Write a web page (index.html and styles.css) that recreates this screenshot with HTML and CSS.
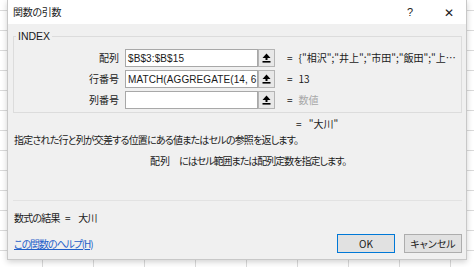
FILE: index.html
```html
<!DOCTYPE html>
<html lang="ja">
<head>
    <meta charset="UTF-8">
    <title>関数の引数</title>
    <link rel="stylesheet" href="styles.css">
</head>
<body>

<div class="dialog">
    <!-- タイトルバー -->
    <div class="titlebar">
        <span class="title">関数の引数</span>
        <span class="help-btn">?</span>
        <span class="close-btn">✕</span>
    </div>

    <div class="content">
        <fieldset class="group">
            <legend>INDEX</legend>
            <div class="arg-row">
                <span class="arg-label">配列</span>
                <div class="arg-input">$B$3:$B$15</div>
                <span class="ref-btn"><svg width="9" height="10" viewBox="0 0 9 10"><path d="M4.5 0.5 L8.5 5 H5.5 V7 H3.5 V5 H0.5 Z" fill="#000"/><rect x="0.5" y="8" width="8" height="1.6" fill="#000"/></svg></span>
                <span class="eq">=</span>
                <span class="arg-value">{"相沢";"井上";"市田";"飯田";"上…</span>
            </div>
            <div class="arg-row">
                <span class="arg-label">行番号</span>
                <div class="arg-input">MATCH(AGGREGATE(14, 6, $B$3:$B$15</div>
                <span class="ref-btn"><svg width="9" height="10" viewBox="0 0 9 10"><path d="M4.5 0.5 L8.5 5 H5.5 V7 H3.5 V5 H0.5 Z" fill="#000"/><rect x="0.5" y="8" width="8" height="1.6" fill="#000"/></svg></span>
                <span class="eq">=</span>
                <span class="arg-value">13</span>
            </div>
            <div class="arg-row">
                <span class="arg-label">列番号</span>
                <div class="arg-input"></div>
                <span class="ref-btn"><svg width="9" height="10" viewBox="0 0 9 10"><path d="M4.5 0.5 L8.5 5 H5.5 V7 H3.5 V5 H0.5 Z" fill="#000"/><rect x="0.5" y="8" width="8" height="1.6" fill="#000"/></svg></span>
                <span class="eq">=</span>
                <span class="arg-value muted">数値</span>
            </div>
        </fieldset>

        <div class="result-line"><span class="eq">=</span> "大川"</div>
        <p class="desc">指定された行と列が交差する位置にある値またはセルの参照を返します。</p>
        <p class="arg-desc"><span class="arg-name">配列</span>にはセル範囲または配列定数を指定します。</p>

        <div class="separator"></div>

        <div class="formula-result">数式の結果 <span class="eq">=</span> 大川</div>

        <div class="footer">
            <a class="help-link" href="#">この関数のヘルプ(H)</a>
            <div class="buttons">
                <button class="btn default">OK</button>
                <button class="btn">キャンセル</button>
            </div>
        </div>
    </div>
</div>

</body>
</html>
```

FILE: styles.css
```css
body {
    margin: 0;
    width: 474px;
    height: 267px;
    overflow: hidden;
    font-family: "Noto Sans CJK JP", "Liberation Sans", sans-serif;
    font-size: 10px;
    line-height: 14px;
    font-feature-settings: "palt";
    color: #1a1a1a;
    background-color: #fff;
    background-image:
        linear-gradient(to right, #dadada 1px, transparent 1px),
        linear-gradient(to bottom, #dadada 1px, transparent 1px);
    background-size: 51px 20px;
    background-position: -9px 10px;
}
.dialog {
    margin-left: 7px;
    width: 460px;
    height: 260px;
    background: #f0f0f0;
    border: 1px solid #c8c8c8;
    border-top: none;
    box-sizing: border-box;
    box-shadow: 0 2px 6px rgba(0, 0, 0, 0.18);
    display: flex;
    flex-direction: column;
}
.titlebar {
    height: 24px;
    background: #fff;
    display: flex;
    align-items: center;
    padding: 0 0 0 5px;
}
.title {
    flex: 1;
    letter-spacing: -0.3px;
}
.help-btn {
    width: 44px;
    text-align: center;
    font-family: "Liberation Sans", sans-serif;
    font-size: 11px;
}
.close-btn {
    width: 34px;
    text-align: center;
    font-size: 12px;
}
.content {
    padding: 5px 4px 0 5px;
    display: flex;
    flex-direction: column;
}
.group {
    margin: 0;
    padding: 6px 0 3px 0;
    border: 1px solid #dcdcdc;
    display: flex;
    flex-direction: column;
    gap: 3px;
}
.group legend {
    padding: 0 2px;
    margin-left: 2px;
    font-family: "Liberation Sans", sans-serif;
    font-size: 10.5px;
    line-height: 14px;
}
.arg-row {
    display: flex;
    align-items: center;
    height: 18px;
}
.arg-label {
    width: 105px;
    text-align: right;
    padding-right: 6px;
}
.arg-input {
    width: 133px;
    height: 18px;
    box-sizing: border-box;
    background: #fff;
    border: 1px solid #a8a8a8;
    padding: 2px 2px;
    white-space: nowrap;
    overflow: hidden;
    font-family: "Liberation Sans", sans-serif;
    font-size: 10px;
    letter-spacing: 0.1px;
    line-height: 13px;
}
.ref-btn {
    width: 17px;
    height: 18px;
    box-sizing: border-box;
    border: 1px solid #b4b4b4;
    background: #e8e8e8;
    display: flex;
    align-items: center;
    justify-content: center;
}
.eq {
    padding: 0 6px 0 12px;
}
.arg-value {
    white-space: nowrap;
}
.muted {
    color: #a8a8a8;
}
.result-line {
    margin: 4px 0 0 283px;
}
.result-line .eq {
    padding: 0 5px 0 0;
}
.desc {
    margin: 2px 0 0 1px;
    letter-spacing: -0.8px;
}
.arg-desc {
    margin: 7px 0 0 137px;
    letter-spacing: -1px;
}
.arg-name {
    margin-right: 9px;
    letter-spacing: 0;
}
.separator {
    margin-top: 32px;
    border-top: 1px solid #e2e2e2;
}
.formula-result {
    margin: 10px 0 0 1px;
    letter-spacing: -0.8px;
}
.formula-result .eq {
    padding: 0 7px 0 4px;
}
.footer {
    display: flex;
    align-items: center;
    justify-content: space-between;
    margin-top: 9px;
}
.help-link {
    color: #1f5fc9;
    margin-left: 1px;
    letter-spacing: -1.1px;
}
.buttons {
    display: flex;
    gap: 9px;
}
.btn {
    width: 58px;
    height: 19px;
    border: 1px solid #adadad;
    background: #e1e1e1;
    font-family: "Noto Sans CJK JP", sans-serif;
    font-size: 10px;
    font-feature-settings: "palt";
    color: #1a1a1a;
    padding: 0;
}
.btn.default {
    border-color: #0078d7;
}
```
